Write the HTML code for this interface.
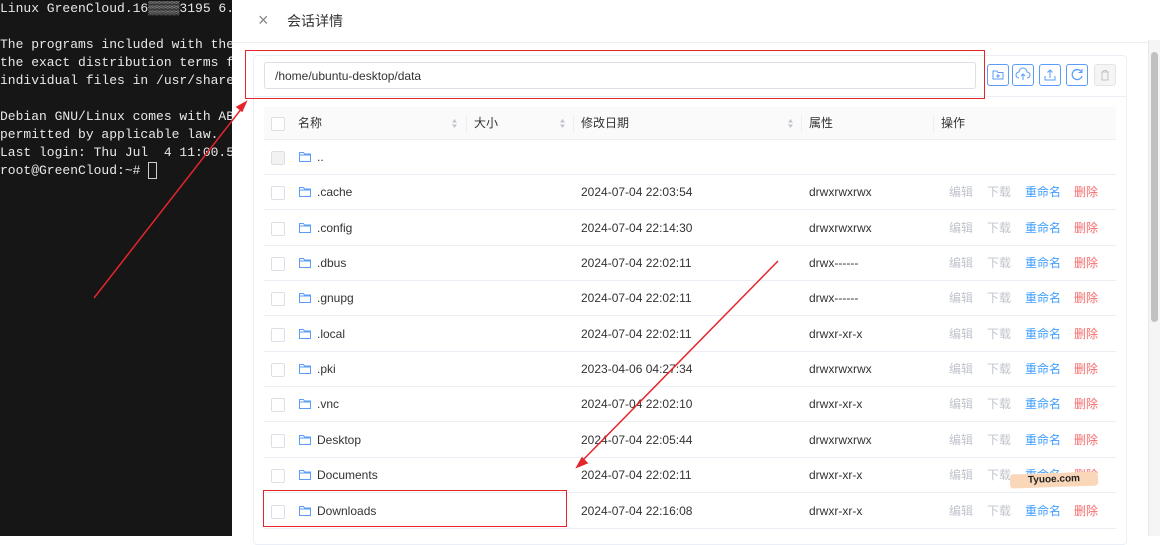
<!DOCTYPE html><html><head><meta charset="utf-8"><style>
*{box-sizing:border-box;margin:0;padding:0}
body{width:1160px;height:536px;overflow:hidden;position:relative;background:#fff;font-family:"Liberation Sans","Noto Sans CJK SC",sans-serif;font-size:12px;color:#333}
.term{position:absolute;left:0;top:0;width:232px;height:536px;background:#161616;color:#e8e8e8;font-family:"Liberation Mono",monospace;font-size:13px;line-height:18px;white-space:pre;overflow:hidden;padding-top:0px}
.a{position:absolute}
.row{position:absolute;left:264px;width:852px;height:35px;border-bottom:1px solid #ebeef5}
.cb{position:absolute;left:7px;top:11px;width:14px;height:14px;border:1px solid #dcdfe6;border-radius:2px;background:#fff}
.t{position:absolute;top:10px;font-size:12px;line-height:14px;height:14px;white-space:nowrap}
.fold{position:absolute;left:35px;top:12px;width:12px;height:10px}
.btn{position:absolute;top:64px;width:22px;height:22px;border:1px solid #5a9cf8;border-radius:3px;background:#fff}
.sort{position:absolute;top:11px;width:7px;height:11px}
</style></head><body>
<div class="term">Linux GreenCloud.16▒▒▒▒3195 6.

The programs included with the
the exact distribution terms f
individual files in /usr/share

Debian GNU/Linux comes with AB
permitted by applicable law.
Last login: Thu Jul  4 11:00.5
root@GreenCloud:~# <span style="display:inline-block;width:9px;height:17px;border:1px solid #ccc;vertical-align:middle"></span></div>
<div class="a" style="left:232px;top:0;width:928px;height:536px;background:#fff"></div>
<div class="a" style="left:258px;top:10px;font-size:18px;color:#888">×</div>
<div class="a" style="left:287px;top:11px;font-size:14px;color:#333">会话详情</div>
<div class="a" style="left:232px;top:42px;width:916px;height:1px;background:#ebeef5"></div>
<div class="a" style="left:253px;top:55px;width:874px;height:490px;border:1px solid #ebeef5;border-radius:4px"></div>
<div class="a" style="left:253px;top:96px;width:874px;height:1px;background:#ebeef5"></div>
<div class="a" style="left:1148px;top:40px;width:12px;height:496px;background:#f5f5f5;border-left:1px solid #e8e8e8"></div>
<div class="a" style="left:1151px;top:52px;width:7px;height:270px;background:#c1c1c1;border-radius:4px"></div>
<div class="a" style="left:264px;top:62px;width:712px;height:27px;border:1px solid #dcdfe6;border-radius:3px;padding:6px 10px;font-size:12px;color:#333">/home/ubuntu-desktop/data</div>
<div class="btn" style="left:987px"><svg width="20" height="20" viewBox="0 0 20 20"><path d="M5 6h4l1 1.5h5v6.5H5z" fill="none" stroke="#5a9cf8"/><path d="M10 9v4M8 11h4" stroke="#5a9cf8"/></svg></div>
<div class="btn" style="left:1012px"><svg width="20" height="20" viewBox="0 0 20 20"><path d="M6 13a3 3 0 0 1 0-6a4 4 0 0 1 8 0a3 3 0 0 1 0 6" fill="none" stroke="#5a9cf8"/><path d="M10 15V9M8 11l2-2 2 2" fill="none" stroke="#5a9cf8"/></svg></div>
<div class="btn" style="left:1039px"><svg width="20" height="20" viewBox="0 0 20 20"><path d="M5 11v4h10v-4M10 13V5M7.5 7.5L10 5l2.5 2.5" fill="none" stroke="#5a9cf8"/></svg></div>
<div class="btn" style="left:1066px"><svg width="20" height="20" viewBox="0 0 20 20"><path d="M14.5 7A5 5 0 1 0 15 11" fill="none" stroke="#5a9cf8" stroke-width="1.3"/><path d="M15 4v3.5h-3.5" fill="none" stroke="#5a9cf8"/></svg></div>
<div class="btn" style="left:1094px;border-color:#e4e4e4;background:#f5f5f5"><svg width="20" height="20" viewBox="0 0 20 20"><path d="M6 7h8M7 7v8h6V7M8.5 7V5.5h3V7" fill="none" stroke="#c0c4cc"/></svg></div>
<div class="row" style="top:107px;height:33px;background:#fafafa"><div class="cb" style="top:10px"></div>
<div class="t" style="left:34px;top:9px;color:#333">名称</div><svg class="sort" style="left:187px" viewBox="0 0 7 11"><path d="M3.5 1L6 4.5H1zM3.5 10L6 6.5H1z" fill="#c0c4cc"/></svg><div class="a" style="left:202px;top:8px;width:1px;height:17px;background:#eee"></div>
<div class="t" style="left:210px;top:9px">大小</div><svg class="sort" style="left:295px" viewBox="0 0 7 11"><path d="M3.5 1L6 4.5H1zM3.5 10L6 6.5H1z" fill="#c0c4cc"/></svg><div class="a" style="left:309px;top:8px;width:1px;height:17px;background:#eee"></div>
<div class="t" style="left:317px;top:9px">修改日期</div><svg class="sort" style="left:523px" viewBox="0 0 7 11"><path d="M3.5 1L6 4.5H1zM3.5 10L6 6.5H1z" fill="#c0c4cc"/></svg><div class="a" style="left:537px;top:8px;width:1px;height:17px;background:#eee"></div>
<div class="t" style="left:545px;top:9px">属性</div><div class="a" style="left:669px;top:8px;width:1px;height:17px;background:#eee"></div>
<div class="t" style="left:677px;top:9px">操作</div></div>
<div id="rows"></div>
<script>
var d=[["..","",""],[".cache","2024-07-04 22:03:54","drwxrwxrwx"],[".config","2024-07-04 22:14:30","drwxrwxrwx"],[".dbus","2024-07-04 22:02:11","drwx------"],[".gnupg","2024-07-04 22:02:11","drwx------"],[".local","2024-07-04 22:02:11","drwxr-xr-x"],[".pki","2023-04-06 04:27:34","drwxrwxrwx"],[".vnc","2024-07-04 22:02:10","drwxr-xr-x"],["Desktop","2024-07-04 22:05:44","drwxrwxrwx"],["Documents","2024-07-04 22:02:11","drwxr-xr-x"],["Downloads","2024-07-04 22:16:08","drwxr-xr-x"]];
var h="";var fs='<svg class="fold" viewBox="0 0 12 10"><path d="M.5 .5h4l1 1.5h6v7.5H.5z" fill="none" stroke="#5a9cf8"/><path d="M.5 3h11" stroke="#5a9cf8"/></svg>';
d.forEach(function(r,i){var top=140+i*35.35;h+='<div class="row" style="top:'+top+'px"><div class="cb"'+(i==0?' style="background:#f2f2f2"':'')+'></div>'+fs+'<div class="t" style="left:53px;color:#333">'+r[0]+'</div>';
if(i>0)h+='<div class="t" style="left:317px">'+r[1]+'</div><div class="t" style="left:545px">'+r[2]+'</div><div class="t" style="left:685px;color:#c0c4cc">编辑</div><div class="t" style="left:723px;color:#c0c4cc">下载</div><div class="t" style="left:761px;color:#409eff">重命名</div><div class="t" style="left:810px;color:#f56c6c">删除</div>';
h+='</div>';});document.getElementById('rows').innerHTML=h;
</script>
<div class="a" style="left:1010px;top:473px;width:88px;height:14px;background:#f9d7b8;border-radius:3px;transform:rotate(-2deg);font-size:10px;color:#222;text-align:center;line-height:14px;font-weight:bold">Tyuoe.com</div>
<div class="a" style="left:245px;top:50px;width:740px;height:49px;border:1.5px solid #e5252a"></div>
<div class="a" style="left:263px;top:490px;width:304px;height:37px;border:1.5px solid #e5252a"></div>
<svg class="a" style="left:0;top:0" width="1160" height="536"><g stroke="#e5252a" stroke-width="1.5" fill="#e5252a"><line x1="94" y1="298" x2="242" y2="108"/><path d="M246 102l-9 5 5 4z"/><line x1="778" y1="261" x2="582" y2="461"/><path d="M577 467l10-4-5-5z"/></g></svg>
</body></html>
